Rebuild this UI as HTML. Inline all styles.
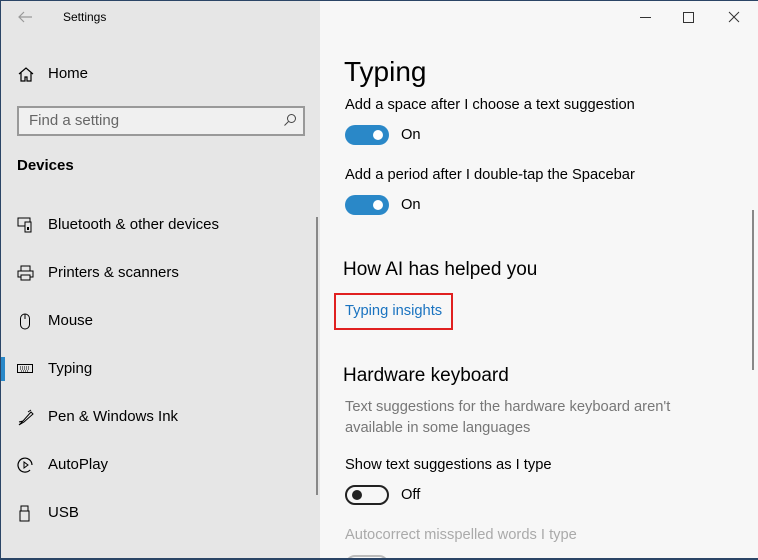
<!DOCTYPE html>
<html style="width:758px;height:560px;overflow:hidden"><head><style>
*{margin:0;padding:0;box-sizing:border-box}
body{width:758px;height:560px;overflow:hidden;font-family:"Liberation Sans",sans-serif;background:#f7f7f7;position:relative;color:#000}
.side{position:absolute;left:0;top:0;width:320px;height:560px;background:#e6e6e6}
.t{position:absolute;white-space:nowrap}
.frame{position:absolute;left:0;top:0;width:758px;height:560px;border:1px solid #2b4566;border-right:none;pointer-events:none}
.nav{position:absolute;left:48px;font-size:15px;color:#000}
.ic{position:absolute;left:17px}
.tog{position:absolute;left:345px;width:44px;height:20px;border-radius:10px;overflow:hidden}
.on{background:#2a88c8}
.on::after{content:"";position:absolute;right:6px;top:5px;width:10px;height:10px;border-radius:50%;background:#fff}
.off{border:2px solid #222}
.off::after{content:"";position:absolute;left:5px;top:3px;width:10px;height:10px;border-radius:50%;background:#222}
.lbl{position:absolute;left:345px;font-size:14.7px;color:#000}
</style></head><body>
<div class="side">
<svg class="t" style="left:17px;top:10px" width="16" height="14"><path d="M15 7H2M7 2L2 7l5 5" stroke="#999" fill="none" stroke-width="1.2"/></svg>
<div class="t" style="left:63px;top:10px;font-size:12px">Settings</div>
<svg class="ic" style="top:66px" width="18" height="16"><path d="M2 8L9 2l7 6M4 6.5V15h4v-4h2v4h4V6.5" stroke="#000" fill="none" stroke-width="1.2"/></svg>
<div class="nav" style="top:65px">Home</div>
<div class="t" style="left:17px;top:106px;width:288px;height:30px;border:2px solid #999;background:#f0f0f0"></div>
<div class="t" style="left:29px;top:112px;font-size:15px;color:#666">Find a setting</div>
<svg class="t" style="left:283px;top:113px" width="14" height="14"><circle cx="8.5" cy="5.5" r="4" stroke="#444" fill="none"/><path d="M5.5 8.5L1.5 12.5" stroke="#444"/></svg>
<div class="t" style="left:17px;top:157px;font-size:15px;font-weight:bold">Devices</div>
<svg class="ic" style="top:217px" width="16" height="16"><rect x="1" y="1" width="12" height="8" fill="none" stroke="#000"/><rect x="8" y="5" width="6" height="10" fill="#e6e6e6" stroke="#000"/><rect x="10" y="10" width="2" height="3"/></svg>
<div class="nav" style="top:216px">Bluetooth &amp; other devices</div>
<svg class="ic" style="top:265px" width="17" height="16"><rect x="4" y="1" width="9" height="5" fill="none" stroke="#000"/><rect x="1" y="6" width="15" height="6" fill="none" stroke="#000"/><rect x="4" y="10" width="9" height="5" fill="#e6e6e6" stroke="#000"/></svg>
<div class="nav" style="top:264px">Printers &amp; scanners</div>
<svg class="ic" style="top:313px" width="16" height="17"><rect x="3.5" y="1" width="9" height="15" rx="4.5" fill="none" stroke="#000"/><path d="M8 1v5" stroke="#000"/></svg>
<div class="nav" style="top:312px">Mouse</div>
<div class="t" style="left:0;top:357px;width:5px;height:24px;background:#2a88c8"></div>
<svg class="ic" style="top:364px" width="16" height="10"><rect x=".5" y=".5" width="15" height="8" fill="none" stroke="#000"/><path d="M3 3h10M3 5h10M4 7h8" stroke="#000" stroke-dasharray="1 1"/></svg>
<div class="nav" style="top:360px">Typing</div>
<svg class="ic" style="top:409px" width="17" height="17"><path d="M2 16l4-4 8-9 2 2-9 8zM11 3l3-2M6 12l-4 1" stroke="#000" fill="none"/></svg>
<div class="nav" style="top:408px">Pen &amp; Windows Ink</div>
<svg class="ic" style="top:457px" width="17" height="17"><path d="M13 13A7 7 0 1 1 15 8" stroke="#000" fill="none" stroke-width="1.2"/><path d="M7 5v6l4-3z" fill="none" stroke="#000"/></svg>
<div class="nav" style="top:456px">AutoPlay</div>
<svg class="ic" style="top:505px" width="16" height="17"><rect x="4" y="1" width="7" height="5" fill="none" stroke="#000"/><rect x="3" y="6" width="9" height="10" fill="none" stroke="#000"/></svg>
<div class="nav" style="top:504px">USB</div>
<div class="t" style="left:316px;top:217px;width:2px;height:278px;background:#888"></div>
</div>
<svg class="t" style="left:640px;top:10px" width="110" height="16"><path d="M0 7.5h11" stroke="#333"/><rect x="43.5" y="2.5" width="10" height="10" fill="none" stroke="#333"/><path d="M89 2l10 10M99 2L89 12" stroke="#333"/></svg>
<div class="t" style="left:344px;top:56px;font-size:28px">Typing</div>
<div class="lbl" style="top:97px">Add a space after I choose a text suggestion</div>
<div class="tog on" style="top:125px"></div><div class="lbl" style="left:401px;top:127px">On</div>
<div class="lbl" style="top:167px">Add a period after I double-tap the Spacebar</div>
<div class="tog on" style="top:195px"></div><div class="lbl" style="left:401px;top:197px">On</div>
<div class="t" style="left:343px;top:259px;font-size:19px">How AI has helped you</div>
<div class="t" style="left:334px;top:293px;width:119px;height:37px;border:2px solid #e02020"></div>
<div class="t" style="left:345px;top:303px;font-size:14.7px;color:#1a73c0">Typing insights</div>
<div class="t" style="left:343px;top:365px;font-size:19px">Hardware keyboard</div>
<div class="t" style="left:345px;top:397px;font-size:14.7px;color:#777;line-height:21px">Text suggestions for the hardware keyboard aren't<br>available in some languages</div>
<div class="lbl" style="top:457px">Show text suggestions as I type</div>
<div class="tog off" style="top:485px"></div><div class="lbl" style="left:401px;top:487px">Off</div>
<div class="lbl" style="top:527px;color:#aaa">Autocorrect misspelled words I type</div>
<div class="t" style="left:345px;top:555px;width:44px;height:3px;overflow:hidden"><div style="width:44px;height:20px;border:2px solid #bbb;border-radius:10px"></div></div>
<div class="t" style="left:752px;top:210px;width:2px;height:160px;background:#888"></div>
<div class="frame"></div>
<div class="t" style="left:0;top:558px;width:758px;height:2px;background:#2b4566"></div>
</body></html>
